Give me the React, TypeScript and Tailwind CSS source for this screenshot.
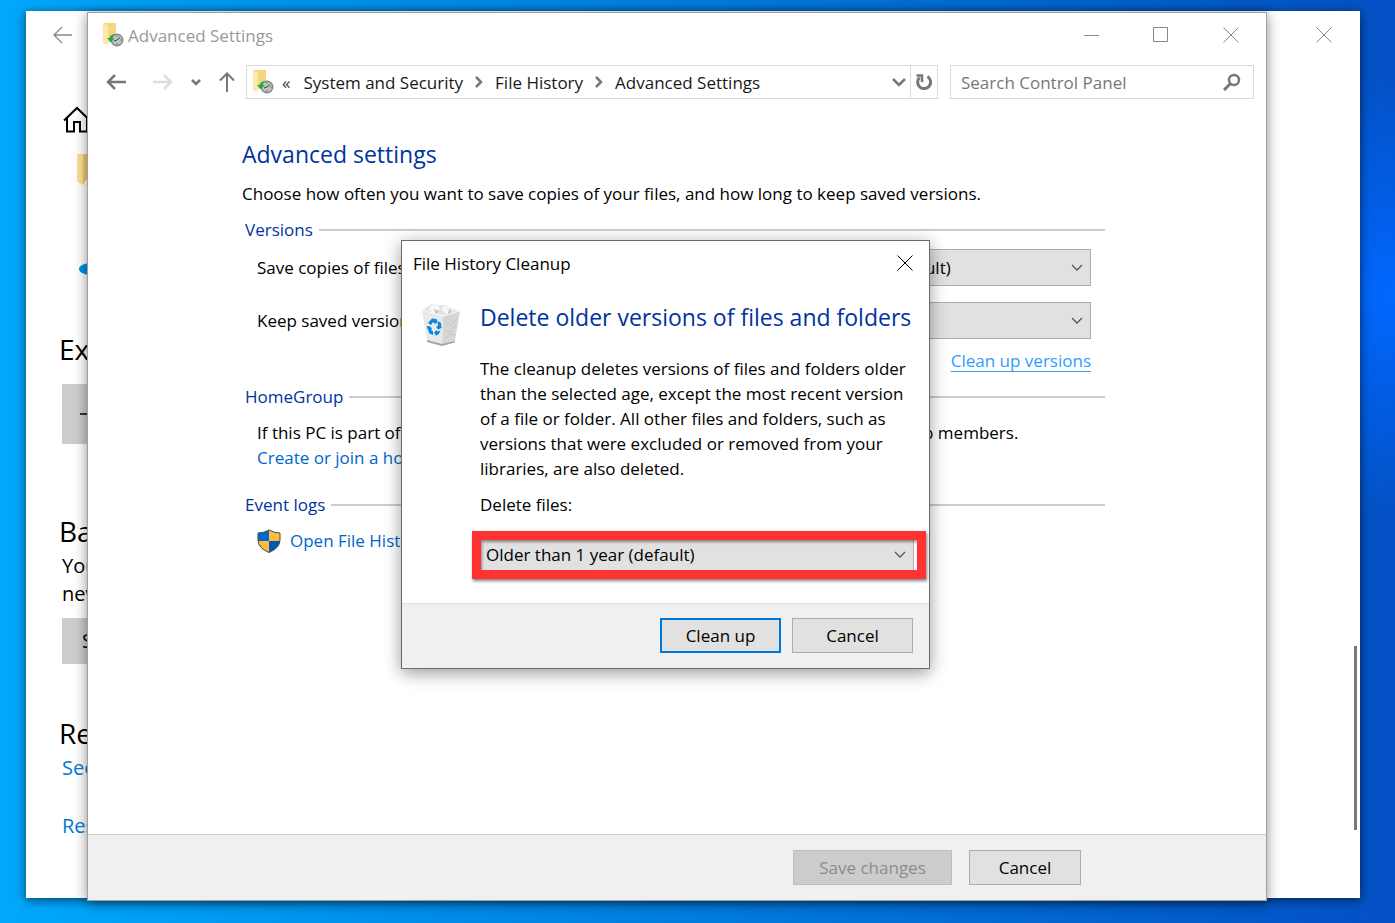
import { useState } from "react";

const intervals = ["Every hour (default)"];
const keep = ["Forever (default)"];
const ages = ["Older than 1 year (default)"];

function FolderIcon() {
  return (
    <svg width="22" height="24" viewBox="0 0 22 24" className="shrink-0">
      <path d="M1 0h13v19H6l-3 2.500L1 20z" fill="#f6d77c" />
      <path d="M1 0l5 3v18.500L1 20z" fill="#fde9ac" />
      <circle cx="15" cy="17" r="6.500" fill="#868b88" />
      <circle cx="15" cy="17" r="5" fill="#bfc3c1" />
      <path d="M12 18l3-1 3-2.500M15 12.500v1M15 20.500v1M19.500 17h-1" stroke="#3f4341" fill="none" />
      <path d="M12.500 11q-4 .5-5 4H5l4 4.500 3.500-4.500h-2q.5-2.500 2-4z" fill="#1fae45" />
    </svg>
  );
}

function CloseIcon() {
  return (
    <svg width="16" height="16" viewBox="0 0 16 16" fill="none" stroke="currentColor">
      <path d="M.5.5l15 15M15.500.5l-15 15" />
    </svg>
  );
}

function BinIcon() {
  return (
    <svg width="40" height="44" viewBox="0 0 40 44">
      <path d="M2 8l8-6 6 1 7 0 7 3 8 4-6 4H6z" fill="#e3e3e3" />
      <path d="M10 3l6-1 3 5-6 4-5-3zM22 4l6 1 4 5-7 2-4-4z" fill="#f7f7f7" />
      <path d="M13 7l5 2-3 4zM28 6l3 4-4 3z" fill="#c4c4c4" />
      <path d="M1 8l21 6-1 29L6 39z" fill="#e9e9e9" />
      <path d="M22 14l17-5-5 30-13 4z" fill="#d6d6d6" />
      <path d="M24 20l6 3 6-6M24 28l5 2 6-7M25 36l4-4 5 1" stroke="#c8c8c8" fill="none" />
      <path d="M1 8l21 6 17-5" stroke="#fafafa" fill="none" />
      <path d="M6 38l15 4 13-3v1.500L21 44 6 40z" fill="#a5a5a5" />
      <g fill="#0a84e0">
        <path d="M7 21l4-4.500 4.500.5 1 3-2 2-2.500-2-2 3z" />
        <path d="M16.500 19l3.500 2 .5 5-3.500 1.500-2-3 2-.5z" />
        <path d="M5.500 24l4 .5 1.500 2.500-1 1.500 2 .5v4l-3.500-1.500z" />
        <path d="M13 30.500l3-2.500v1.500l3.500-1-2 4-2 .5v1.500z" />
      </g>
    </svg>
  );
}

function ShieldIcon() {
  return (
    <svg width="24" height="24" viewBox="0 0 24 24">
      <path d="M12 1Q7 4 1 4v7q0 8 11 12.500z" fill="#0067d0" />
      <path d="M12 1q5 3 11 3v7q0 8-11 12.500z" fill="#ffbc3a" />
      <path d="M1 12h11v11.500Q2 19 1 12z" fill="#ffbc3a" />
      <path d="M12 12h11q-1 7-11 11.500z" fill="#0057bd" />
      <path d="M12 1Q7 4 1 4v7q0 8 11 12.500Q23 19 23 11V4Q17 4 12 1z" fill="none" stroke="#4a4a4a" />
    </svg>
  );
}

function Chevron() {
  return (
    <svg width="12" height="8" viewBox="0 0 12 8" fill="none" stroke="#555" strokeWidth="1.300">
      <path d="M1 1l5 5 5-5" />
    </svg>
  );
}

function Crumb({ label }: { label: string }) {
  return (
    <a href="#" className="text-[#191919]">
      {label}
    </a>
  );
}

function CrumbArrow() {
  return (
    <svg width="8" height="12" viewBox="0 0 8 12" fill="none" stroke="#777" strokeWidth="2.500">
      <path d="M1 1l5 5-5 5" />
    </svg>
  );
}

function Combo({ id, options }: { id: string; options: string[] }) {
  const [value, setValue] = useState(options[0]);

  return (
    <div className="relative w-full">
      <select
        id={id}
        value={value}
        onChange={(event) => setValue(event.target.value)}
        className="h-[37px] w-full appearance-none border border-[#adadad] bg-[#e1e1e1] px-[5px] text-black"
      >
        {options.map((option) => (
          <option key={option}>{option}</option>
        ))}
      </select>
      <span className="pointer-events-none absolute inset-y-0 right-2 flex items-center">
        <Chevron />
      </span>
    </div>
  );
}

function GroupTitle({ label }: { label: string }) {
  return (
    <div className="flex items-center gap-[6px]">
      <h2 className="text-[#0033a0]">{label}</h2>
      <span className="h-[2px] flex-1 bg-[#cccccc]" />
    </div>
  );
}

function SettingsWindow() {
  return (
    <section className="absolute top-[11px] right-[35px] bottom-[25px] left-[26px] overflow-hidden bg-white text-xl/7 whitespace-nowrap text-black shadow-[0_2px_10px_rgba(0,0,0,0.6)]">
      <header className="flex h-12 items-center justify-between pr-7 pl-[27px] text-[#888]">
        <button aria-label="Back">
          <svg width="19" height="18" viewBox="0 0 19 18" fill="none" stroke="currentColor" strokeWidth="1.300">
            <path d="M9 1L1 9l8 8M1 9h18" />
          </svg>
        </button>
        <button aria-label="Close settings">
          <CloseIcon />
        </button>
      </header>
      <div className="flex flex-col items-start pl-9">
        <svg width="30" height="28" viewBox="0 0 30 28" fill="none" stroke="#000" strokeWidth="2" className="mt-[47px]">
          <path d="M2 14.500L15 2l13 12.500M5 12v13.500h7V16h6v9.500h7V12" />
        </svg>
        <svg width="40" height="34" viewBox="0 0 40 34" className="mt-5 ml-[15px]">
          <path d="M0 0h40v26H9l-3 5-6-4z" fill="#f2cb6a" />
          <path d="M0 0h6v31l-6-4z" fill="#fddf93" />
        </svg>
        <svg width="24" height="14" viewBox="0 0 24 14" className="mt-[74px] ml-[17px]">
          <ellipse cx="12" cy="7" rx="12" ry="6" fill="#0090ea" />
        </svg>
        <h2 className="mt-[55px] -ml-[3px] text-[28px]/9">Exclude</h2>
        <button aria-label="Add a folder" className="mt-[17px] flex h-[60px] w-60 items-center bg-[#cccccc] pl-[18px]">
          <span className="h-[2px] w-6 bg-[#333]" />
        </button>
        <h2 className="mt-[69px] -ml-[3px] text-[28px]/9">Back up</h2>
        <p className="mt-[3px]">
          You'll need
          <br />
          new drive
        </p>
        <button className="mt-[10px] h-[46px] w-60 bg-[#cccccc] pl-5 text-left">Stop</button>
        <h2 className="mt-[51px] -ml-[3px] text-[28px]/9">Related</h2>
        <a href="#" className="mt-[3px] text-[#0078d7]">
          See advanced
        </a>
        <a href="#" className="mt-[30px] text-[#0078d7]">
          Restore
        </a>
      </div>
      <span className="absolute top-[635px] right-[3px] h-[184px] w-[3px] bg-[#7a7a7a]" />
    </section>
  );
}

function AddressBar() {
  return (
    <nav className="flex h-[34px] items-center pr-3 text-[#777]">
      <div className="flex w-[158px] items-center pl-[18px]">
        <button aria-label="Back">
          <svg width="20" height="16" viewBox="0 0 20 16" fill="none" stroke="currentColor" strokeWidth="2.500">
            <path d="M9 1L2 8l7 7M2 8h18" />
          </svg>
        </button>
        <button aria-label="Forward" className="ml-[27px] text-[#dddddd]">
          <svg width="20" height="16" viewBox="0 0 20 16" fill="none" stroke="currentColor" strokeWidth="2.500">
            <path d="M11 1l7 7-7 7M18 8H0" />
          </svg>
        </button>
        <button aria-label="Recent locations" className="ml-[18px]">
          <svg width="10" height="7" viewBox="0 0 10 7" fill="none" stroke="currentColor" strokeWidth="2.500">
            <path d="M1 1l4 4 4-4" />
          </svg>
        </button>
        <button aria-label="Up" className="ml-[18px]">
          <svg width="16" height="20" viewBox="0 0 16 20" fill="none" stroke="currentColor" strokeWidth="2">
            <path d="M1 8.500L8 1.500l7 7M8 2v18" />
          </svg>
        </button>
      </div>
      <div className="flex h-full flex-1 items-center border border-[#d9d9d9] pl-[5px]">
        <FolderIcon />
        <span className="mr-[13px] ml-2 text-[#333]">«</span>
        <div className="flex flex-1 items-center gap-3">
          <Crumb label="System and Security" />
          <CrumbArrow />
          <Crumb label="File History" />
          <CrumbArrow />
          <Crumb label="Advanced Settings" />
        </div>
        <button aria-label="Previous locations" className="pr-1">
          <svg width="14" height="10" viewBox="0 0 14 10" fill="none" stroke="currentColor" strokeWidth="2.500">
            <path d="M1 2l6 6 6-6" />
          </svg>
        </button>
        <button aria-label="Refresh" className="flex h-full w-[27px] items-center justify-center border-l border-[#d9d9d9]">
          <svg width="18" height="18" viewBox="0 0 18 18" fill="none" stroke="currentColor" strokeWidth="3">
            <path d="M12.500 3.500A6.500 6.500 0 1 1 4.500 4.500" />
            <path d="M1.500 2.500h5.500V9" strokeWidth="2.500" />
          </svg>
        </button>
      </div>
      <label className="ml-3 flex h-full w-[304px] items-center border border-[#d9d9d9] pr-3 pl-[10px]">
        <input type="search" aria-label="Search Control Panel" placeholder="Search Control Panel" className="min-w-0 flex-1 outline-none placeholder:text-[#777]" />
        <svg width="18" height="18" viewBox="0 0 18 18" fill="none" stroke="currentColor" strokeWidth="2.500">
          <circle cx="11" cy="7" r="5" />
          <path d="M7.500 10.500L1 17" strokeWidth="3" />
        </svg>
      </label>
    </nav>
  );
}

function ControlPanelWindow() {
  return (
    <section className="absolute top-3 right-32 bottom-[22px] left-[87px] flex flex-col overflow-hidden border border-[#a0a0a0] bg-white shadow-[0_2px_12px_rgba(0,0,0,0.45)]">
      <header className="flex h-11 items-center pr-[27px] pl-[14px] text-[#999]">
        <FolderIcon />
        <h1 className="ml-1 flex-1">Advanced Settings</h1>
        <div className="flex items-center gap-[54px] text-[#888]">
          <button aria-label="Minimize">
            <svg width="15" height="16" viewBox="0 0 15 16" stroke="currentColor">
              <path d="M0 8.500h15" />
            </svg>
          </button>
          <button aria-label="Maximize">
            <svg width="16" height="16" viewBox="0 0 16 16" fill="none" stroke="currentColor">
              <path d="M.5.5h14v14H.5z" />
            </svg>
          </button>
          <button aria-label="Close">
            <CloseIcon />
          </button>
        </div>
      </header>
      <div className="pt-2">
        <AddressBar />
      </div>
      <main className="mt-10 flex-1 pl-[154px]">
        <h1 className="text-[23px]/[30px] text-[#0033a0]">Advanced settings</h1>
        <p className="mt-3">Choose how often you want to save copies of your files, and how long to keep saved versions.</p>
        <div className="ml-[3px] w-[860px]">
          <div className="pt-[11px]">
            <GroupTitle label="Versions" />
            <div className="mt-[7px] flex flex-col gap-4 pr-[14px] pl-3">
              <div className="flex items-center justify-between">
                <label htmlFor="save">Save copies of files:</label>
                <div className="w-[302px]">
                  <Combo id="save" options={intervals} />
                </div>
              </div>
              <div className="flex items-center justify-between">
                <label htmlFor="keep">Keep saved versions:</label>
                <div className="w-[302px]">
                  <Combo id="keep" options={keep} />
                </div>
              </div>
            </div>
            <div className="mt-[9px] flex justify-end pr-[14px]">
              <a href="#" className="text-[#3399ff] underline underline-offset-4">
                Clean up versions
              </a>
            </div>
          </div>
          <div className="pt-[11px]">
            <GroupTitle label="HomeGroup" />
            <p className="mt-[11px] pl-3">
              If this PC is part of a homegroup, you can recommend this drive for other homegroup members.
              <br />
              <a href="#" className="text-[#0066cc]">
                Create or join a homegroup
              </a>
            </p>
          </div>
          <div className="pt-[22px]">
            <GroupTitle label="Event logs" />
            <a href="#" className="mt-[11px] flex items-center gap-[9px] pl-3 text-[#0066cc]">
              <ShieldIcon />
              Open File History event logs
            </a>
          </div>
        </div>
      </main>
      <footer className="flex h-[66px] items-center justify-end gap-[17px] border-t border-[#cccccc] bg-[#f0f0f0] pr-[185px]">
        <button disabled className="h-[35px] w-[159px] border border-[#bfbfbf] bg-[#cccccc] text-[#8c8c8c]">
          Save changes
        </button>
        <button className="h-[35px] w-[112px] border border-[#adadad] bg-[#e1e1e1]">Cancel</button>
      </footer>
    </section>
  );
}

function CleanupDialog() {
  return (
    <section
      role="dialog"
      aria-label="File History Cleanup"
      className="absolute top-60 left-[401px] w-[529px] border border-[#6b6b6b] bg-white shadow-[0_4px_16px_rgba(0,0,0,0.4)]"
    >
      <header className="flex h-11 items-center justify-between pr-4 pl-[11px]">
        <h1>File History Cleanup</h1>
        <button aria-label="Close dialog">
          <CloseIcon />
        </button>
      </header>
      <div className="flex gap-[19px] pt-[17px] pr-[15px] pb-[30px] pl-[19px]">
        <BinIcon />
        <div className="min-w-0 flex-1">
          <h2 className="text-[23px]/[30px] whitespace-nowrap text-[#0033a0]">Delete older versions of files and folders</h2>
          <p className="mt-6 whitespace-nowrap">
            The cleanup deletes versions of files and folders older
            <br />
            than the selected age, except the most recent version
            <br />
            of a file or folder. All other files and folders, such as
            <br />
            versions that were excluded or removed from your
            <br />
            libraries, are also deleted.
          </p>
          <label htmlFor="age" className="mt-[11px] block">
            Delete files:
          </label>
          <div className="relative mt-[19px]">
            <Combo id="age" options={ages} />
            <span className="pointer-events-none absolute -top-[5px] -right-3 -left-2 h-12 border-[9px] border-[#ff3333] shadow-[1px_2px_3px_rgba(0,0,0,0.5),inset_1px_2px_3px_rgba(0,0,0,0.4)]" />
          </div>
        </div>
      </div>
      <footer className="flex justify-end gap-[11px] border-t border-[#dfdfdf] bg-[#f0f0f0] pt-[14px] pr-4 pb-[15px]">
        <button className="h-[35px] w-[121px] border-2 border-[#0078d7] bg-[#e1e1e1]">Clean up</button>
        <button className="h-[35px] w-[121px] border border-[#adadad] bg-[#e1e1e1]">Cancel</button>
      </footer>
    </section>
  );
}

export default function App() {
  return (
    <div className="relative h-screen w-full overflow-hidden bg-[radial-gradient(circle_at_100%_32%,#0068ff,transparent_220px),linear-gradient(to_right,#00a8fc,#0078dc_55%,#0450c4)] font-['Open_Sans','Noto_Sans',sans-serif] text-[17px]/[25px] text-black">
      <SettingsWindow />
      <ControlPanelWindow />
      <CleanupDialog />
    </div>
  );
}
